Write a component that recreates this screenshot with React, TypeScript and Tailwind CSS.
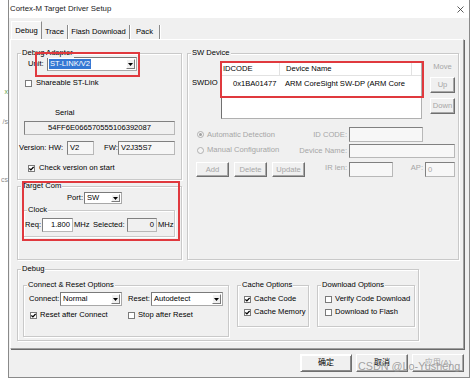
import type { ReactNode } from "react";

const dis = "text-[#a6a6a6]";

function Group({
  label,
  className = "",
  children,
}: {
  label: string;
  className?: string;
  children?: ReactNode;
}) {
  return (
    <div
      className={`relative shrink-0 border border-[#c9c9c9] shadow-[inset_1px_1px_0_#ffffff,1px_1px_0_#ffffff] ${className}`}
    >
      <span className="absolute -top-[6px] left-[3px] bg-[#f0f0f0] px-[1px] leading-[10px] whitespace-nowrap">
        {label}
      </span>
      {children}
    </div>
  );
}

function Combo({
  value,
  className = "",
  selected = false,
}: {
  value: string;
  className?: string;
  selected?: boolean;
}) {
  return (
    <div
      className={`flex shrink-0 bg-white border border-[#a8a8a8] border-t-[#7a7a7a] border-l-[#7a7a7a] ${className}`}
    >
      <div className="flex-1 flex items-center pl-[1px] overflow-hidden whitespace-nowrap">
        <span
          className={
            selected
              ? "bg-[#3478d4] text-white px-[1px] leading-[10px]"
              : "pl-[1px] leading-[10px]"
          }
        >
          {value}
        </span>
      </div>
      <div className="w-[9px] my-[1px] mr-[1px] flex items-center justify-center bg-[#f0f0f0] border border-t-white border-l-white border-r-[#7a7a7a] border-b-[#7a7a7a]">
        <svg width="5" height="3" viewBox="0 0 5 3">
          <path d="M0 0h5L2.5 3z" fill="#000" />
        </svg>
      </div>
    </div>
  );
}

function Field({
  className = "",
  children,
}: {
  className?: string;
  children?: ReactNode;
}) {
  return (
    <div
      className={`flex shrink-0 items-center overflow-hidden whitespace-nowrap border border-[#b8b8b8] border-t-[#808080] border-l-[#808080] ${className}`}
    >
      {children}
    </div>
  );
}

function Btn({
  className = "",
  children,
}: {
  className?: string;
  children?: ReactNode;
}) {
  return (
    <div
      className={`flex shrink-0 items-center justify-center bg-[#f0f0f0] border border-t-white border-l-white border-r-[#6f6f6f] border-b-[#6f6f6f] shadow-[inset_-1px_-1px_0_#a8a8a8] ${className}`}
    >
      {children}
    </div>
  );
}

function Check({ on = false }: { on?: boolean }) {
  return (
    <span className="w-[7px] h-[7px] shrink-0 bg-white border border-[#7a7a7a] flex items-center justify-center">
      {on && (
        <svg width="5" height="5" viewBox="0 0 5 5">
          <path d="M0.4 2.4 L1.9 3.9 L4.6 0.9" stroke="#000" strokeWidth="1.3" fill="none" />
        </svg>
      )}
    </span>
  );
}

function Radio({ on = false }: { on?: boolean }) {
  return (
    <span className="w-[7px] h-[7px] shrink-0 rounded-full bg-[#f4f4f4] border border-[#b0b0b0] flex items-center justify-center">
      {on && <span className="w-[3px] h-[3px] rounded-full bg-[#a0a0a0]" />}
    </span>
  );
}

function CheckRow({ label, on, className = "" }: { label: string; on?: boolean; className?: string }) {
  return (
    <div className={`flex items-center gap-[3px] h-[10px] leading-[10px] whitespace-nowrap ${className}`}>
      <Check on={on} />
      <span>{label}</span>
    </div>
  );
}

export default function App() {
  return (
    <div className="relative w-[474px] h-[382px] overflow-hidden bg-white text-black text-[7.6px] leading-[10px] font-['Liberation_Sans','Noto_Sans_CJK_SC',Arial,sans-serif]">
      <div className="flex">
        {/* background behind the dialog */}
        <div className="w-[8px] h-[382px] overflow-hidden flex flex-col items-end">
          <span className="mt-[88px] text-[7px] text-[#6aa84f] leading-[8px]">x</span>
          <span className="mt-[22px] text-[7px] text-[#8a8a8a] leading-[8px]">/s</span>
          <span className="mt-[50px] text-[7px] text-[#8a8a8a] leading-[8px]">cs</span>
        </div>

        {/* dialog window */}
        <div className="w-[462px] h-[378px] flex flex-col bg-[#f0f0f0] border-l border-r border-b border-[#8a8a8a]">
          {/* title bar */}
          <div className="h-[18px] shrink-0 bg-white flex items-center justify-between pl-[1px] pr-[5px]">
            <span className="text-[7.8px] text-[#1a1a1a]">Cortex-M Target Driver Setup</span>
            <svg width="7" height="7" viewBox="0 0 7 7">
              <path d="M0.5 0.5 L6.5 6.5 M6.5 0.5 L0.5 6.5" stroke="#333" strokeWidth="0.8" />
            </svg>
          </div>

          {/* tabs */}
          <div className="h-[21px] shrink-0 pt-[3px] pl-[2px] flex items-end">
            <div className="w-[31px] h-[18px] pt-[1px] flex items-center justify-center bg-[#f4f4f4] border-t border-l border-white border-r border-r-[#8a8a8a]">
              Debug
            </div>
            <div className="w-[26px] h-[14px] flex items-center justify-center border-r border-r-[#8a8a8a] shadow-[1px_0_0_#ffffff]">
              Trace
            </div>
            <div className="w-[62px] h-[14px] flex items-center justify-center border-r border-r-[#8a8a8a] shadow-[1px_0_0_#ffffff]">
              Flash Download
            </div>
            <div className="w-[30px] h-[14px] flex items-center justify-center border-r border-r-[#8a8a8a] shadow-[1px_0_0_#ffffff]">
              Pack
            </div>
          </div>

          {/* tab panel */}
          <div className="ml-[1px] w-[454px] h-[310px] shrink-0 pl-[6px] pt-[13px] border-t border-l border-white border-r border-b border-r-[#a0a0a0] border-b-[#a0a0a0] shadow-[1px_1px_0_#6a6a6a]">
            <div className="flex gap-[5px] items-start">
              <div className="w-[165px] flex flex-col gap-[6px]">
                <Group label="Debug Adapter" className="w-[165px] h-[127px]">
                  <div className="flex flex-col">
                    <div className="mt-[3px] h-[14px] flex items-center pl-[10px]">
                      <span className="w-[19px]">Unit:</span>
                      <Combo value="ST-LINK/V2" selected className="w-[90px] h-[14px]" />
                    </div>
                    <CheckRow label="Shareable ST-Link" className="mt-[7px] pl-[7px] gap-[4px]" />
                    <div className="mt-[20px] h-[10px] pl-[37px]">Serial</div>
                    <Field className="mt-[3px] ml-[6px] w-[151px] h-[14px] justify-center bg-[#f0f0f0]">
                      54FF6E066570555106392087
                    </Field>
                    <div className="mt-[6px] h-[14px] flex items-center pl-[1px]">
                      <span className="w-[48px] whitespace-nowrap">Version: HW:</span>
                      <Field className="w-[27px] h-[14px] pl-[2px] bg-[#f6f6f6]">V2</Field>
                      <span className="w-[24px] pl-[10px]">FW:</span>
                      <Field className="w-[57px] h-[14px] pl-[2px] bg-[#f6f6f6]">V2J35S7</Field>
                    </div>
                    <CheckRow on label="Check version on start" className="mt-[8px] pl-[10px] gap-[4px]" />
                  </div>
                </Group>

                <Group label="Target Com" className="w-[165px] h-[74px]">
                  <div className="flex flex-col">
                    <div className="mt-[5px] h-[12px] flex items-center pl-[49px]">
                      <span className="w-[17px]">Port:</span>
                      <Combo value="SW" className="w-[38px] h-[12px]" />
                    </div>
                    <Group label="Clock" className="mt-[6px] ml-[5px] w-[152px] h-[27px]">
                      <div className="mt-[7px] h-[14px] flex items-center pl-[1px]">
                        <span className="w-[17px]">Req:</span>
                        <Field className="w-[31px] h-[14px] justify-end pr-[2px] bg-white">1.800</Field>
                        <span className="w-[20px] pl-[1px]">MHz</span>
                        <span className="w-[34px]">Selected:</span>
                        <Field className="w-[30px] h-[14px] justify-end pr-[2px] bg-[#f0f0f0]">0</Field>
                        <span className="pl-[1px]">MHz</span>
                      </div>
                    </Group>
                  </div>
                </Group>
              </div>

              <Group label="SW Device" className="w-[272px] h-[207px]">
                <div className="flex flex-col">
                  <div className="mt-[8px] flex items-start">
                    <div className="w-[33px] pl-[4px] pt-[16px]">SWDIO</div>
                    <div className="w-[201px] h-[57px] bg-white border border-[#b0b0b0] border-l-[#707070] border-t-[#8a8a8a] flex flex-col">
                      <div className="h-[13px] flex border-b border-[#e2e2e2]">
                        <div className="w-[58px] pl-[1px] flex items-center border-r border-[#e2e2e2]">IDCODE</div>
                        <div className="w-[132px] pl-[6px] flex items-center border-r border-[#e2e2e2]">Device Name</div>
                        <div className="flex-1" />
                      </div>
                      <div className="h-[16px] flex items-center whitespace-nowrap">
                        <span className="w-[58px] pl-[11px]">0x1BA01477</span>
                        <span className="pl-[5px]">ARM CoreSight SW-DP (ARM Core</span>
                      </div>
                    </div>
                    <div className={`ml-[8px] w-[25px] flex flex-col ${dis}`}>
                      <div className="h-[10px] text-center">Move</div>
                      <Btn className="mt-[5px] h-[16px]">Up</Btn>
                      <Btn className="mt-[5px] h-[16px]">Down</Btn>
                    </div>
                  </div>

                  <div className={`mt-[8px] h-[15px] flex items-center ${dis}`}>
                    <div className="w-[161px] flex items-center justify-between pl-[9px] pr-[2px]">
                      <div className="flex items-center gap-[3px]">
                        <Radio on />
                        <span>Automatic Detection</span>
                      </div>
                      <span>ID CODE:</span>
                    </div>
                    <Field className="w-[74px] h-[15px] bg-[#f7f7f7]" />
                  </div>

                  <div className={`mt-[2px] h-[14px] flex items-center ${dis}`}>
                    <div className="w-[161px] flex items-center justify-between pl-[9px] pr-[2px]">
                      <div className="flex items-center gap-[3px] -mt-[2px]">
                        <Radio />
                        <span>Manual Configuration</span>
                      </div>
                      <span>Device Name:</span>
                    </div>
                    <Field className="w-[106px] h-[14px] bg-[#f7f7f7]" />
                  </div>

                  <div className={`mt-[4px] h-[15px] flex items-center ${dis}`}>
                    <div className="w-[161px] flex items-center pl-[8px] pr-[2px]">
                      <Btn className="w-[33px] h-[15px]">Add</Btn>
                      <Btn className="ml-[5px] w-[33px] h-[15px]">Delete</Btn>
                      <Btn className="ml-[5px] w-[33px] h-[15px]">Update</Btn>
                      <span className="flex-1 text-right -mt-[3px]">IR len:</span>
                    </div>
                    <Field className="w-[44px] h-[15px] bg-[#f7f7f7]" />
                    <span className="w-[32px] pr-[2px] text-right -mt-[3px]">AP:</span>
                    <Field className="w-[30px] h-[15px] pl-[2px] bg-[#f7f7f7]">0</Field>
                  </div>
                </div>
              </Group>
            </div>

            <Group label="Debug" className="mt-[9px] w-[402px] h-[72px]">
              <div className="mt-[15px] pl-[5px] flex items-start gap-[8px]">
                <Group label="Connect & Reset Options" className="w-[206px] h-[52px]">
                  <div className="mt-[6px] h-[14px] flex items-center pl-[5px]">
                    <span className="w-[31px]">Connect:</span>
                    <Combo value="Normal" className="w-[62px] h-[14px]" />
                    <span className="ml-[6px] w-[23px]">Reset:</span>
                    <Combo value="Autodetect" className="w-[72px] h-[14px]" />
                  </div>
                  <div className="mt-[4px] flex pl-[6px]">
                    <CheckRow on label="Reset after Connect" className="w-[98px]" />
                    <CheckRow label="Stop after Reset" />
                  </div>
                </Group>

                <Group label="Cache Options" className="w-[72px] h-[42px]">
                  <CheckRow on label="Cache Code" className="mt-[8px] pl-[6px]" />
                  <CheckRow on label="Cache Memory" className="mt-[3px] pl-[6px]" />
                </Group>

                <Group label="Download Options" className="w-[98px] h-[42px]">
                  <CheckRow label="Verify Code Download" className="mt-[8px] pl-[7px] w-[95px] overflow-hidden" />
                  <CheckRow label="Download to Flash" className="mt-[3px] pl-[7px]" />
                </Group>
              </div>
            </Group>
          </div>

          {/* dialog buttons */}
          <div className="mt-[5px] pr-[5px] flex justify-end gap-[4px] text-[8px]">
            <Btn className="w-[52px] h-[18px] border-[#3c3c3c] border-t-[#3c3c3c] border-l-[#3c3c3c] shadow-[inset_1px_1px_0_#ffffff,inset_-1px_-1px_0_#8a8a8a]">
              确定
            </Btn>
            <Btn className="w-[52px] h-[18px]">取消</Btn>
            <Btn className={`w-[52px] h-[18px] ${dis}`}>应用(A)</Btn>
          </div>
        </div>
      </div>

      {/* red annotation boxes */}
      <div className="absolute left-[35px] top-[52px] w-[105px] h-[25px] border-2 border-[#e0393e]" />
      <div className="absolute left-[220px] top-[61px] w-[204px] h-[37px] border-2 border-[#e0393e]" />
      <div className="absolute left-[22px] top-[181px] w-[158px] h-[60px] border-2 border-[#e0393e]" />

      {/* watermark */}
      <div className="absolute left-[358px] top-[359px] text-[10.8px] leading-[14px] text-[#8c8c8c]/80 whitespace-nowrap">
        CSDN @Lo-Yusheng
      </div>
    </div>
  );
}
